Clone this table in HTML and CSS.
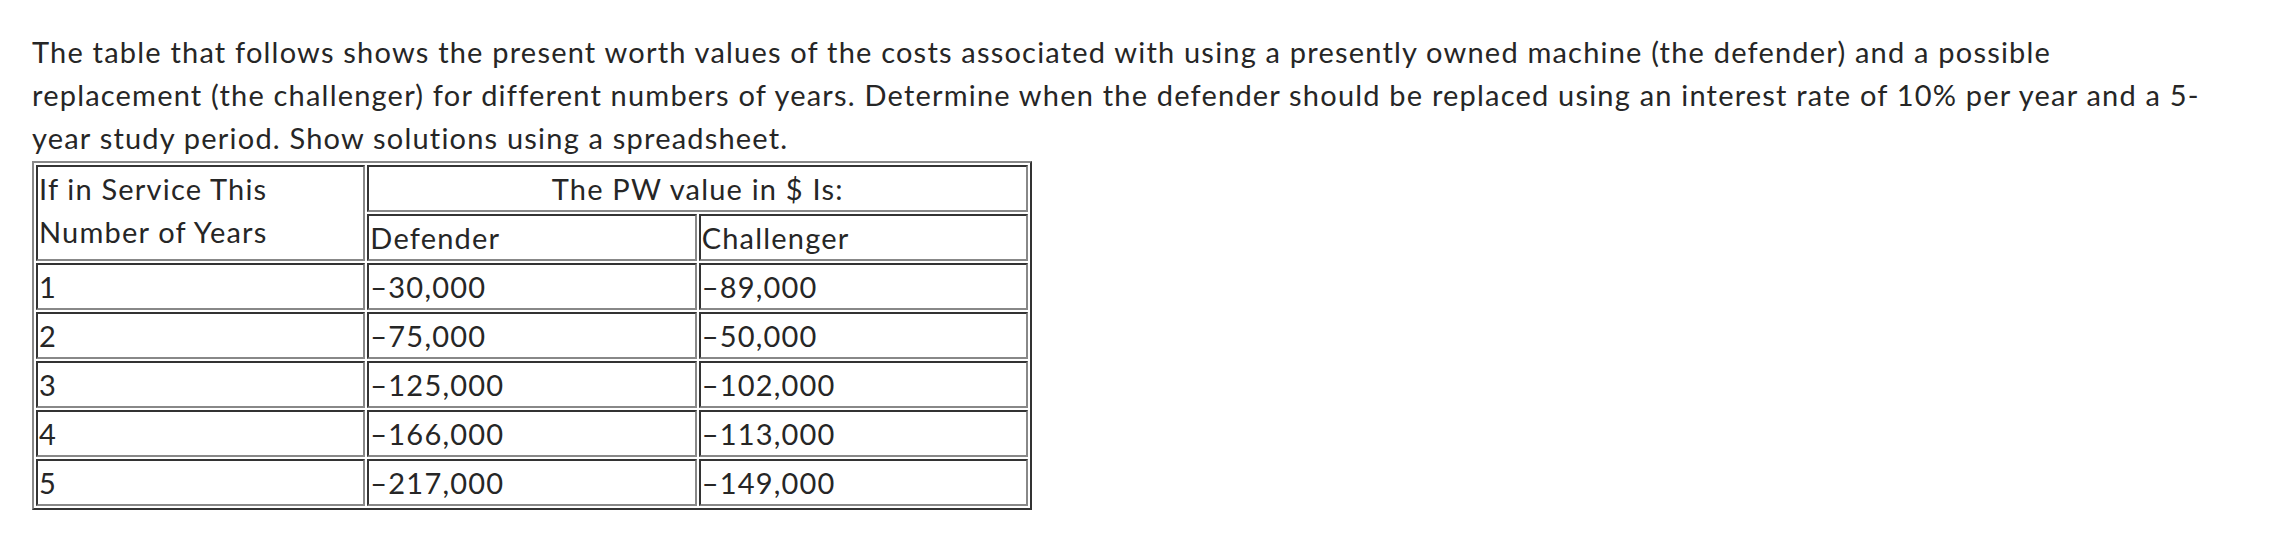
FILE: index.html
```html
<!DOCTYPE html>
<html lang="en">
<head>
<meta charset="utf-8">
<title>Defender vs Challenger</title>
<link rel="stylesheet" href="styles.css">
</head>
<body>
<div class="page">
  <p class="question">The table that follows shows the present worth values of the costs associated with using a presently owned machine (the defender) and a possible replacement (the challenger) for different numbers of years. Determine when the defender should be replaced using an interest rate of 10% per year and a 5-year study period. Show solutions using a spreadsheet.</p>
  <table class="pw">
    <tr>
      <td rowspan="2" class="top">If in Service This<br>Number of Years</td>
      <td colspan="2" class="center">The PW value in $ Is:</td>
    </tr>
    <tr><td>Defender</td><td>Challenger</td></tr>
    <tr><td>1</td><td>–30,000</td><td>–89,000</td></tr>
    <tr><td>2</td><td>–75,000</td><td>–50,000</td></tr>
    <tr><td>3</td><td>–125,000</td><td>–102,000</td></tr>
    <tr><td>4</td><td>–166,000</td><td>–113,000</td></tr>
    <tr><td>5</td><td>–217,000</td><td>–149,000</td></tr>
  </table>
</div>
</body>
</html>
```
FILE: styles.css
```css
html, body {
  margin: 0;
  padding: 0;
  background: #ffffff;
}
body {
  color: #262626;
  font-family: Lato, "Liberation Sans", sans-serif;
}
.page {
  padding: 30px 0 0 32px;
}
.question {
  margin: 0 0 2px;
  width: 2190px;
  font-size: 29px;
  letter-spacing: 1.2px;
  line-height: 43px;
}
.pw {
  width: 1000px;
  table-layout: fixed;
  border-collapse: separate;
  border-spacing: 2px;
  border: 2px solid;
  border-color: #888888 #333333 #333333 #888888;
  font-size: 29px;
  letter-spacing: 1.2px;
}
.pw td {
  border: 2px solid;
  border-color: #333333 #888888 #888888 #333333;
  padding: 0 1px;
  line-height: 43px;
  text-align: left;
  vertical-align: middle;
}
.pw td.top {
  vertical-align: top;
}
.pw td.center {
  text-align: center;
}
```
